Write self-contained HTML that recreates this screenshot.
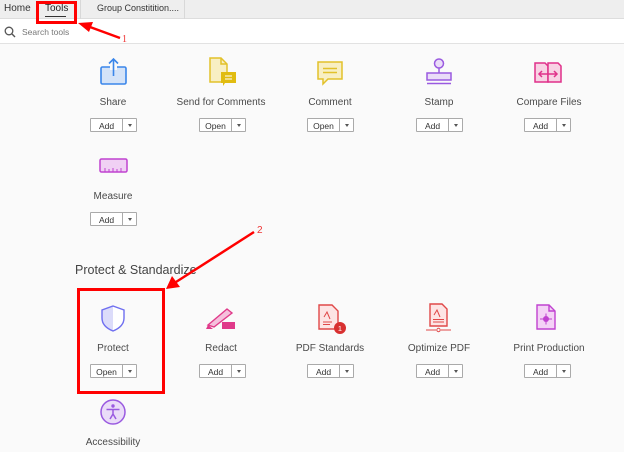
<!DOCTYPE html>
<html><head><meta charset="utf-8"><style>
*{margin:0;padding:0;box-sizing:border-box}
body{width:624px;height:452px;overflow:hidden;background:#fafafa;font-family:"Liberation Sans",sans-serif;color:#444;position:relative}
.tabs{position:absolute;left:0;top:0;width:624px;height:19px;background:#eeeeee;border-bottom:1px solid #ddd}
.tab{position:absolute;top:3px;font-size:10px;color:#333}
.sep{position:absolute;top:0;width:1px;height:19px;background:#d8d8d8}
.search{position:absolute;left:0;top:19px;width:624px;height:25px;background:#fff;border-bottom:1px solid #e2e2e2}
.a{position:absolute}
.lbl{position:absolute;font-size:10px;color:#4a4a4a;text-align:center;width:120px}
.btn{position:absolute;height:14px;border:1px solid #aaa;background:#fff;border-radius:1px;font-size:8.5px;color:#333}
.btn .t{position:absolute;left:0;top:1.5px;width:31px;text-align:center}
.btn .d{position:absolute;left:31px;top:0;width:14px;height:12px;border-left:1px solid #aaa}
.btn .d:after{content:"";position:absolute;left:5px;top:4.5px;border:2px solid transparent;border-top:3px solid #555}
.rb{position:absolute;border:3px solid #f00}
</style></head><body>
<div class="tabs">
<div class="tab" style="left:4px">Home</div>
<div class="tab" style="left:45px;color:#222">Tools</div>
<div class="a" style="left:45px;top:16px;width:21px;height:1px;background:#333"></div>
<div class="sep" style="left:80px"></div>
<div class="tab" style="left:97px;font-size:9px">Group Constitition....</div>
<div class="sep" style="left:184px"></div>
</div>
<div class="search">
<svg class="a" style="left:4px;top:7px" width="12" height="12"><circle cx="5" cy="5" r="3.8" fill="none" stroke="#555" stroke-width="1.3"/><line x1="7.8" y1="7.8" x2="11" y2="11" stroke="#555" stroke-width="1.4"/></svg>
<div class="a" style="left:22px;top:8px;font-size:8.5px;color:#777">Search tools</div>
</div>

<svg class="a" style="left:99px;top:57px" width="30" height="30"><rect x="2" y="10" width="25" height="17" rx="1.5" fill="#d4e3f8" stroke="#3a86ea" stroke-width="1.6"/><rect x="11" y="8" width="7" height="5" fill="#fafafa"/><line x1="14.5" y1="2" x2="14.5" y2="19" stroke="#3a86ea" stroke-width="1.6"/><path d="M10 6.5L14.5 2L19 6.5" fill="none" stroke="#3a86ea" stroke-width="1.6"/></svg>
<svg class="a" style="left:208px;top:57px" width="30" height="32"><path d="M2 1H13L19 7V25H2Z" fill="#f8efc3" stroke="#e2c12a" stroke-width="1.5"/><path d="M13 1V7H19" fill="none" stroke="#e2c12a" stroke-width="1.5"/><path d="M13 15H28V26H17L15 29V26H13Z" fill="#e1bc10"/><line x1="17" y1="19" x2="24" y2="19" stroke="#fff"/><line x1="17" y1="22" x2="24" y2="22" stroke="#fff"/></svg>
<svg class="a" style="left:316px;top:60px" width="30" height="28"><path d="M2 2H26V19H12L7 24V19H2Z" fill="#f8efc3" stroke="#e2c12a" stroke-width="1.5"/><line x1="7" y1="8.5" x2="21" y2="8.5" stroke="#e2c12a" stroke-width="1.5"/><line x1="7" y1="12.5" x2="21" y2="12.5" stroke="#e2c12a" stroke-width="1.5"/></svg>
<svg class="a" style="left:424px;top:57px" width="30" height="32"><circle cx="15" cy="6.5" r="4.5" fill="#eadcf8" stroke="#9a5ae0" stroke-width="1.5"/><line x1="15" y1="11" x2="15" y2="16" stroke="#9a5ae0" stroke-width="1.5"/><rect x="3" y="16" width="24" height="7" fill="#eadcf8" stroke="#9a5ae0" stroke-width="1.5"/><line x1="3" y1="26.5" x2="27" y2="26.5" stroke="#9a5ae0" stroke-width="1.5"/></svg>
<svg class="a" style="left:533px;top:61px" width="32" height="24"><path d="M2 2H12L15 5V21H2Z" fill="#f8d2e4" stroke="#e0308a" stroke-width="1.5"/><path d="M15 2H25L28 5V21H15Z" fill="#f8d2e4" stroke="#e0308a" stroke-width="1.5"/><line x1="6" y1="13" x2="24" y2="13" stroke="#e0308a" stroke-width="1.5"/><path d="M9 10L6 13L9 16M21 10L24 13L21 16" fill="none" stroke="#e0308a" stroke-width="1.5"/></svg>
<svg class="a" style="left:98px;top:157px" width="32" height="19"><rect x="2" y="2" width="27" height="13" rx="1.5" fill="#f0d0f4" stroke="#c042d0" stroke-width="1.5"/><path d="M7 15V11M11 15V12M15 15V11M19 15V12M23 15V11" stroke="#c042d0"/></svg>

<div class="lbl" style="left:53px;top:97px">Share</div>
<div class="lbl" style="left:161px;top:97px">Send for Comments</div>
<div class="lbl" style="left:270px;top:97px">Comment</div>
<div class="lbl" style="left:379px;top:97px">Stamp</div>
<div class="lbl" style="left:489px;top:97px">Compare Files</div>
<div class="lbl" style="left:53px;top:191px">Measure</div>

<div class="btn" style="left:90px;top:118px;width:47px"><span class="t">Add</span><span class="d"></span></div>
<div class="btn" style="left:199px;top:118px;width:47px"><span class="t">Open</span><span class="d"></span></div>
<div class="btn" style="left:307px;top:118px;width:47px"><span class="t">Open</span><span class="d"></span></div>
<div class="btn" style="left:416px;top:118px;width:47px"><span class="t">Add</span><span class="d"></span></div>
<div class="btn" style="left:524px;top:118px;width:47px"><span class="t">Add</span><span class="d"></span></div>
<div class="btn" style="left:90px;top:212px;width:47px"><span class="t">Add</span><span class="d"></span></div>

<div class="a" style="left:75px;top:263px;font-size:12.5px;color:#444">Protect &amp; Standardize</div>

<svg class="a" style="left:100px;top:304px" width="26" height="29"><path d="M13 2L24 6V14C24 21 18 25 13 27C8 25 2 21 2 14V6Z" fill="#dcdcfa"/><path d="M13 2V27C18 25 24 21 24 14V6Z" fill="#fff"/><path d="M13 2L24 6V14C24 21 18 25 13 27C8 25 2 21 2 14V6Z" fill="none" stroke="#6f6ff0" stroke-width="1.4"/></svg>
<svg class="a" style="left:204px;top:305px" width="34" height="25"><path d="M4 20L23 4L28 8L10 22Z" fill="#f5c0dc" stroke="#e03a8a" stroke-width="1.4"/><path d="M2 24H9L4 20Z" fill="#e03a8a"/><rect x="18" y="17" width="13" height="7" fill="#e03a8a"/></svg>
<svg class="a" style="left:317px;top:304px" width="32" height="32"><path d="M2 1H15L21 7V25H2Z" fill="#fde4e4" stroke="#e04848" stroke-width="1.4"/><path d="M7 13L10 8L13 15" fill="none" stroke="#e04848"/><line x1="6" y1="18" x2="15" y2="18" stroke="#e04848"/><line x1="6" y1="20.5" x2="13" y2="20.5" stroke="#e04848"/><circle cx="23" cy="24" r="6" fill="#d83030"/><text x="23" y="27" font-size="7.5" fill="#fff" text-anchor="middle" font-family="Liberation Sans">1</text></svg>
<svg class="a" style="left:425px;top:303px" width="30" height="32"><path d="M5 1H17L22 6V23H5Z" fill="#fde4e4" stroke="#e04848" stroke-width="1.4"/><path d="M9 12L12 7L15 14" fill="none" stroke="#e04848"/><line x1="8" y1="16.5" x2="19" y2="16.5" stroke="#e04848"/><line x1="8" y1="19" x2="19" y2="19" stroke="#e04848"/><line x1="1" y1="27" x2="11" y2="27" stroke="#e04848"/><line x1="16" y1="27" x2="26" y2="27" stroke="#e04848"/><circle cx="13.5" cy="27" r="1.7" fill="none" stroke="#e04848"/></svg>
<svg class="a" style="left:535px;top:304px" width="26" height="28"><path d="M2 1H14L20 7V25H2Z" fill="#f4d2f6" stroke="#c042d0" stroke-width="1.4"/><path d="M14 1V7H20" fill="none" stroke="#c042d0" stroke-width="1.4"/><circle cx="11" cy="15" r="3" fill="#c042d0"/><line x1="5" y1="15" x2="17" y2="15" stroke="#c042d0"/><line x1="11" y1="9.5" x2="11" y2="20.5" stroke="#c042d0"/></svg>
<svg class="a" style="left:99px;top:398px" width="28" height="28"><circle cx="14" cy="14" r="12" fill="#eadcf8" stroke="#9a5ae0" stroke-width="1.5"/><circle cx="14" cy="8" r="1.7" fill="#9a5ae0"/><path d="M7.5 11.5H20.5M14 11.5V16M14 16L11 21M14 16L17 21" fill="none" stroke="#9a5ae0" stroke-width="1.5"/></svg>

<div class="lbl" style="left:53px;top:343px">Protect</div>
<div class="lbl" style="left:161px;top:343px">Redact</div>
<div class="lbl" style="left:270px;top:343px">PDF Standards</div>
<div class="lbl" style="left:379px;top:343px">Optimize PDF</div>
<div class="lbl" style="left:489px;top:343px">Print Production</div>
<div class="lbl" style="left:53px;top:437px">Accessibility</div>

<div class="btn" style="left:90px;top:364px;width:47px"><span class="t">Open</span><span class="d"></span></div>
<div class="btn" style="left:199px;top:364px;width:47px"><span class="t">Add</span><span class="d"></span></div>
<div class="btn" style="left:307px;top:364px;width:47px"><span class="t">Add</span><span class="d"></span></div>
<div class="btn" style="left:416px;top:364px;width:47px"><span class="t">Add</span><span class="d"></span></div>
<div class="btn" style="left:524px;top:364px;width:47px"><span class="t">Add</span><span class="d"></span></div>

<div class="rb" style="left:36px;top:1px;width:41px;height:23px"></div>
<div class="rb" style="left:77px;top:288px;width:88px;height:106px"></div>
<svg class="a" style="left:0;top:0" width="624" height="452">
<line x1="120" y1="38" x2="90" y2="27" stroke="#f00" stroke-width="2.5"/>
<path d="M78 23L93 22L89 32Z" fill="#f00"/>
<text x="122" y="42" font-size="10" fill="#e33" font-family="Liberation Serif">1</text>
<line x1="254" y1="232" x2="176" y2="282" stroke="#f00" stroke-width="2.5"/>
<path d="M166 289L172 276L180 287Z" fill="#f00"/>
<text x="257" y="233" font-size="10" fill="#e33" font-family="Liberation Sans">2</text>
</svg>
</body></html>
